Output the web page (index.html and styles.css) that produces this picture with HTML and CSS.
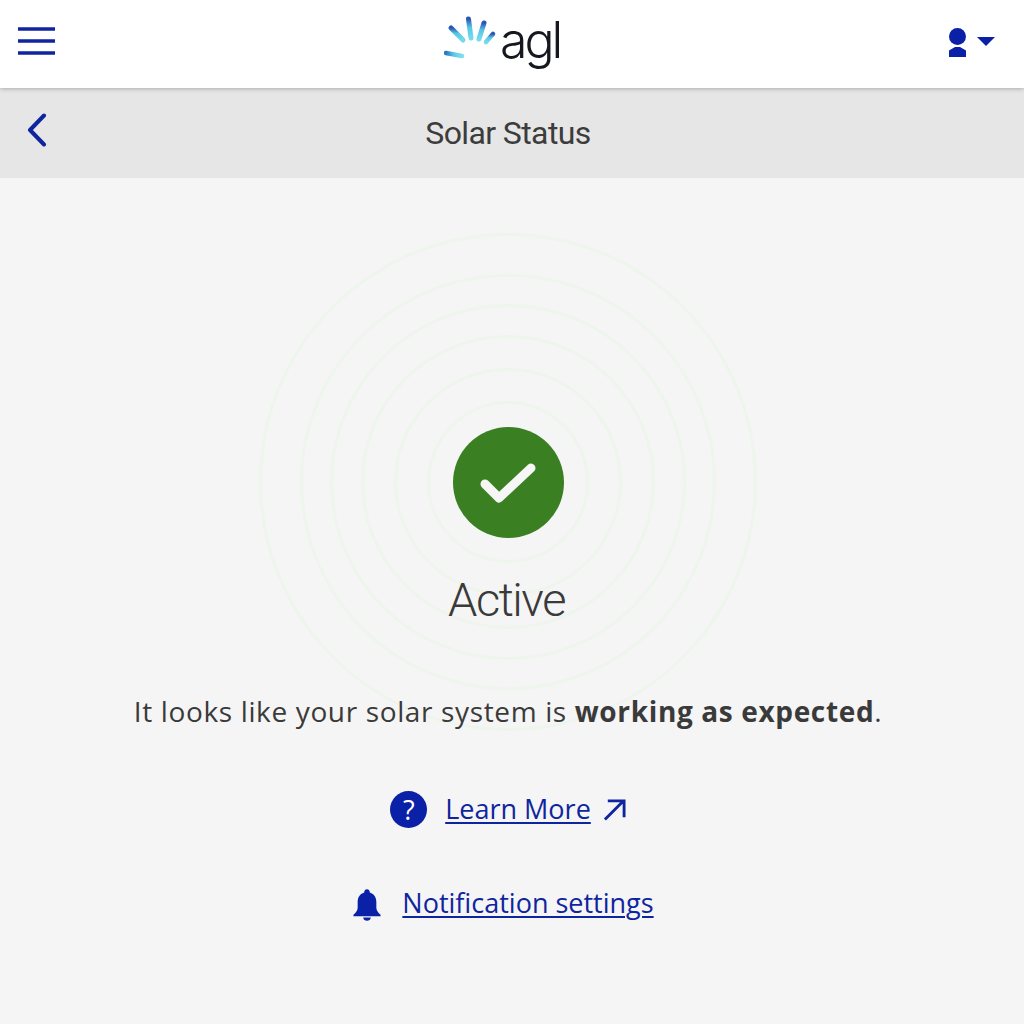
FILE: index.html
```html
<!DOCTYPE html>
<html lang="en">
<head>
<meta charset="utf-8">
<title>Solar Status</title>
<link rel="stylesheet" href="styles.css">
</head>
<body>
<header class="topbar">
  <svg class="menu-icon" viewBox="0 0 37 30" aria-label="Menu"><path d="M0 3H37M0 15H37M0 27H37"/></svg>
  <div class="logo">
    <svg class="logo-rays" viewBox="0 0 60 46">
      <defs>
        <linearGradient id="r1" x1="0" y1="0" x2="0" y2="1"><stop offset="0" stop-color="#2a55b5"/><stop offset=".45" stop-color="#57c6e4"/><stop offset="1" stop-color="#74dbea"/></linearGradient>
        <linearGradient id="r2" x1="0" y1="0" x2="1" y2="0"><stop offset="0" stop-color="#2a78c0"/><stop offset=".5" stop-color="#5ccbe6"/><stop offset="1" stop-color="#7fe0ec"/></linearGradient>
      </defs>
      <path class="ray" stroke="url(#r1)" d="M24.500 4 27 23"/>
      <path class="ray" stroke="url(#r1)" d="M40 8 35 24"/>
      <path class="ray" stroke="url(#r1)" d="M7 13 19 25"/>
      <path class="ray ray-thin" stroke="url(#r1)" d="M49 19 42 27"/>
      <path class="ray ray-thin" stroke="url(#r2)" d="M2 38 18 41"/>
    </svg>
    <span class="logo-text">agl</span>
  </div>
  <div class="account">
    <svg class="account-person" viewBox="0 0 19 34"><circle cx="9.500" cy="12.500" r="8.500"/><path d="M1 26.500 7 23H12L18 26.500V33H1Z"/></svg>
    <svg class="account-caret" viewBox="0 0 18 9"><path d="M0 0H18L9 9Z"/></svg>
  </div>
</header>
<nav class="subbar">
  <svg class="back-icon" viewBox="0 0 20 34"><path d="M17 2.500 3 17 17 31.500"/></svg>
  <h1 class="subbar-title">Solar Status</h1>
</nav>
<main class="content">
  <section class="status">
    <div class="rings">
      <i class="ring ring-1"></i><i class="ring ring-2"></i><i class="ring ring-3"></i>
      <i class="ring ring-4"></i><i class="ring ring-5"></i><i class="ring ring-6"></i>
    </div>
    <div class="status-badge">
      <svg class="status-check" viewBox="0 0 56 40"><path d="M5 21 19 35 51 5"/></svg>
    </div>
    <h2 class="status-label">Active</h2>
  </section>
  <p class="message">It looks like your solar system is <strong>working as expected</strong>.</p>
  <div class="link-row link-row-learn">
    <span class="help-icon">?</span>
    <a class="link" href="#">Learn More</a>
    <svg class="arrow-icon" viewBox="0 0 24 24"><path d="M2 22.500 21 3.500M5 3H22V20"/></svg>
  </div>
  <div class="link-row link-row-notify">
    <svg class="bell-icon" viewBox="0 0 30 34"><path d="M15 0C17 0 18 1.500 18 3.500 23 5 25 9 25 14V20C25 23 27 25.500 29.500 27.500V29H.5V27.500C3 25.500 5 23 5 20V14C5 9 7 5 12 3.500 12 1.500 13 0 15 0Z"/><path d="M11 30.500H19C19 33 17 34 15 34S11 33 11 30.500Z"/></svg>
    <a class="link" href="#">Notification settings</a>
  </div>
</main>
</body>
</html>
```
FILE: styles.css
```css
* { box-sizing: border-box; margin: 0; padding: 0; }
html, body { height: 100%; }
body {
  background: #f5f5f5;
  color: #3a3a3a;
  font-family: "Open Sans", "Noto Sans", sans-serif;
  overflow: hidden;
}
.topbar {
  position: relative;
  z-index: 2;
  height: 88px;
  background: #fff;
  box-shadow: 0 1px 4px rgba(0,0,0,.25);
  display: flex;
  align-items: center;
  justify-content: space-between;
  padding: 0 29px 6px 18px;
}
.menu-icon { width: 37px; height: 30px; fill: none; stroke: #0f259f; stroke-width: 3.6px; }
.logo {
  position: absolute;
  left: 444px;
  top: 15px;
  display: flex;
  align-items: flex-start;
}
.logo-rays { width: 60px; height: 46px; }
.ray { fill: none; stroke-width: 5px; stroke-linecap: round; }
.ray-thin { stroke-width: 4.500px; }
.logo-text {
  font-family: "Inter", "Liberation Sans", sans-serif;
  font-weight: 300;
  font-size: 50px;
  line-height: 50px;
  letter-spacing: -3px;
  color: #15181f;
  margin-left: -4px;
}
.account { display: flex; align-items: center; gap: 10px; }
.account-person { width: 19px; height: 34px; fill: #0a20a6; }
.account-caret { width: 18px; height: 9px; fill: #0a20a6; }
.subbar {
  height: 90px;
  background: #e6e6e6;
  display: flex;
  align-items: center;
  justify-content: center;
  position: relative;
  padding: 0 8px 0 0;
}
.back-icon {
  position: absolute;
  left: 27px;
  top: 25px;
  width: 20px;
  height: 34px;
  fill: none;
  stroke: #0f259f;
  stroke-width: 4px;
  stroke-linecap: round;
  stroke-linejoin: round;
}
.subbar-title {
  font-family: "Roboto", "Noto Sans", sans-serif;
  font-weight: 400;
  font-size: 32px;
  letter-spacing: -.6px;
  color: #3c3c3c;
}
.content {
  display: flex;
  flex-direction: column;
  align-items: center;
  padding-right: 8px;
}
.status {
  position: relative;
  margin-top: 249px;
  display: flex;
  flex-direction: column;
  align-items: center;
}
.rings { position: absolute; left: 50%; top: 55px; width: 0; height: 0; }
.ring {
  position: absolute;
  border: 3px solid #eef5ed;
  border-radius: 50%;
  transform: translate(-50%, -50%);
}
.ring-1 { width: 498px; height: 498px; }
.ring-2 { width: 416px; height: 416px; }
.ring-3 { width: 356px; height: 356px; }
.ring-4 { width: 294px; height: 294px; }
.ring-5 { width: 228px; height: 228px; }
.ring-6 { width: 162px; height: 162px; }
.status-badge {
  position: relative;
  width: 111px;
  height: 111px;
  border-radius: 50%;
  background: #3a7f22;
  display: flex;
  align-items: center;
  justify-content: center;
}
.status-check {
  width: 56px;
  height: 40px;
  fill: none;
  stroke: #f6f6f6;
  stroke-width: 9px;
  stroke-linecap: round;
  stroke-linejoin: round;
}
.status-label {
  position: relative;
  font-family: "Roboto", "Noto Sans", sans-serif;
  font-weight: 300;
  font-size: 47px;
  letter-spacing: -1.500px;
  line-height: 60px;
  margin-top: 32px;
  margin-right: 3px;
  color: #3a3a3a;
}
.message {
  position: relative;
  font-size: 28px;
  letter-spacing: .64px;
  line-height: 38px;
  margin-top: 62px;
  white-space: nowrap;
}
.message strong { font-weight: 700; }
.link-row { display: flex; align-items: center; position: relative; }
.link {
  color: #0f259f;
  font-size: 27px;
  line-height: 38px;
  text-decoration: underline;
  text-decoration-thickness: 2px;
  text-underline-offset: 3px;
}
.link-row-learn { margin-top: 60px; gap: 18px; }
.help-icon {
  width: 37px;
  height: 37px;
  border-radius: 50%;
  background: #0a20a6;
  color: #fff;
  font-size: 27px;
  line-height: 37px;
  text-align: center;
}
.arrow-icon {
  width: 23px;
  height: 23px;
  margin-left: -6px;
  fill: none;
  stroke: #0f259f;
  stroke-width: 3px;
}
.link-row-notify { margin-top: 56px; margin-left: -9px; gap: 21px; }
.bell-icon { width: 28px; height: 34px; fill: #0a20a6; margin-top: 3px; }
```
